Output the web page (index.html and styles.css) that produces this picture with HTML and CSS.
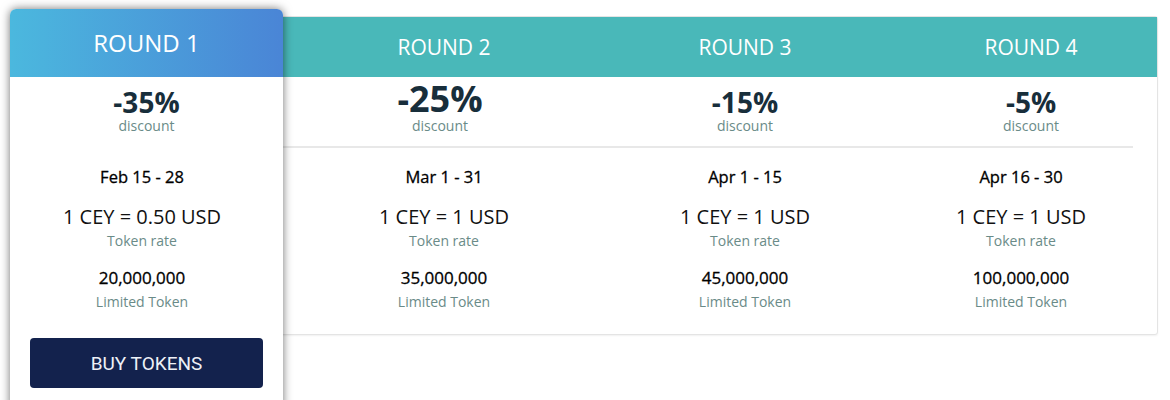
FILE: index.html
```html
<!DOCTYPE html>
<html>
<head>
<meta charset="utf-8">
<link rel="stylesheet" href="styles.css">
</head>
<body>
<div class="page">
  <div class="rounds">
    <div class="col card">
      <div class="card-head">ROUND 1</div>
      <div class="disc">
        <div class="pct">-35%</div>
        <div class="label">discount</div>
      </div>
      <div class="info">
        <div class="date">Feb 15 - 28</div>
        <div class="rate">1 CEY = 0.50 USD</div>
        <div class="label sub">Token rate</div>
        <div class="amount">20,000,000</div>
        <div class="label sub">Limited Token</div>
      </div>
      <button class="buy">BUY TOKENS</button>
    </div>
    <div class="col c2">
      <div class="head">ROUND 2</div>
      <div class="disc line">
        <div class="pct big">-25%</div>
        <div class="label">discount</div>
      </div>
      <div class="info">
        <div class="date">Mar 1 - 31</div>
        <div class="rate">1 CEY = 1 USD</div>
        <div class="label sub">Token rate</div>
        <div class="amount">35,000,000</div>
        <div class="label sub">Limited Token</div>
      </div>
    </div>
    <div class="col c3">
      <div class="head">ROUND 3</div>
      <div class="disc line">
        <div class="pct">-15%</div>
        <div class="label">discount</div>
      </div>
      <div class="info">
        <div class="date">Apr 1 - 15</div>
        <div class="rate">1 CEY = 1 USD</div>
        <div class="label sub">Token rate</div>
        <div class="amount">45,000,000</div>
        <div class="label sub">Limited Token</div>
      </div>
    </div>
    <div class="col c4">
      <div class="head">ROUND 4</div>
      <div class="disc line">
        <div class="pct">-5%</div>
        <div class="label">discount</div>
      </div>
      <div class="info">
        <div class="date">Apr 16 - 30</div>
        <div class="rate">1 CEY = 1 USD</div>
        <div class="label sub">Token rate</div>
        <div class="amount">100,000,000</div>
        <div class="label sub">Limited Token</div>
      </div>
    </div>
  </div>
</div>
</body>
</html>
```

FILE: styles.css
```css
* { box-sizing: border-box; }
html, body { margin: 0; padding: 0; background: #fff; }
body {
  font-family: "Open Sans", "Liberation Sans", sans-serif;
  color: #111;
  overflow: hidden;
  height: 400px;
}
.page {
  padding: 16px 12px 0 10px;
}
.rounds {
  display: flex;
  align-items: flex-start;
  width: 1148px;
  border: 1px solid #e4e4e4;
  border-radius: 3px;
  background: #fff;
  box-shadow: 0 1px 2px rgba(0,0,0,0.06);
}
.col {
  display: flex;
  flex-direction: column;
  text-align: center;
  padding-bottom: 23px;
}
.c2 { width: 322px; }
.c3 { width: 280px; }
.c4 { flex: 1; }

.head {
  height: 60px;
  background: #49b8b9;
  color: #fff;
  font-size: 21px;
  line-height: 60px;
}
.c4 .head { padding-left: 20px; }

.card {
  width: 273px;
  margin: -8px 0 -96px -1px;
  background: #fff;
  border-radius: 6px 6px 0 0;
  box-shadow: 0 0 10px rgba(0,0,0,0.55);
  position: relative;
  z-index: 2;
  padding-bottom: 22px;
}
.card-head {
  height: 68px;
  border-radius: 6px 6px 0 0;
  background: linear-gradient(90deg, #4bb8de 0%, #4a85d6 100%);
  color: #fff;
  font-size: 24px;
  line-height: 68px;
}

.disc {
  padding-top: 9px;
  padding-bottom: 12px;
}
.disc.line { border-bottom: 2px solid #e8e8e8; }
.c2 .disc { padding-right: 8px; }
.c4 .disc { padding-left: 44px; margin-right: 24px; }

.pct {
  font-size: 28px;
  font-weight: 700;
  line-height: 32px;
  color: #182e3b;
}
.pct.big {
  font-size: 36px;
  line-height: 26px;
  margin-bottom: 6px;
}
.label {
  font-size: 14px;
  line-height: 16px;
  color: #6a8b88;
}

.info {
  display: flex;
  flex-direction: column;
  padding-top: 18px;
}
.card .info { padding-right: 9px; padding-top: 20px; }

.date {
  font-size: 16.5px;
  font-weight: 500;
  line-height: 22px;
  color: #000;
  -webkit-text-stroke: 0.3px #000;
}
.rate {
  margin-top: 16px;
  font-size: 20px;
  line-height: 26px;
  color: #111;
}
.label.sub {
  margin-top: 2px;
  line-height: 18px;
}
.amount {
  margin-top: 17px;
  font-size: 17px;
  font-weight: 500;
  line-height: 22px;
  color: #000;
  -webkit-text-stroke: 0.3px #000;
}
.amount + .label.sub { margin-top: 4px; }

.buy {
  margin: 27px 20px 0;
  height: 50px;
  border: none;
  border-radius: 4px;
  background: #13224d;
  color: #eef1f7;
  font-family: Roboto, "Liberation Sans", sans-serif;
  font-size: 19px;
  font-weight: 400;
  cursor: pointer;
}
```
